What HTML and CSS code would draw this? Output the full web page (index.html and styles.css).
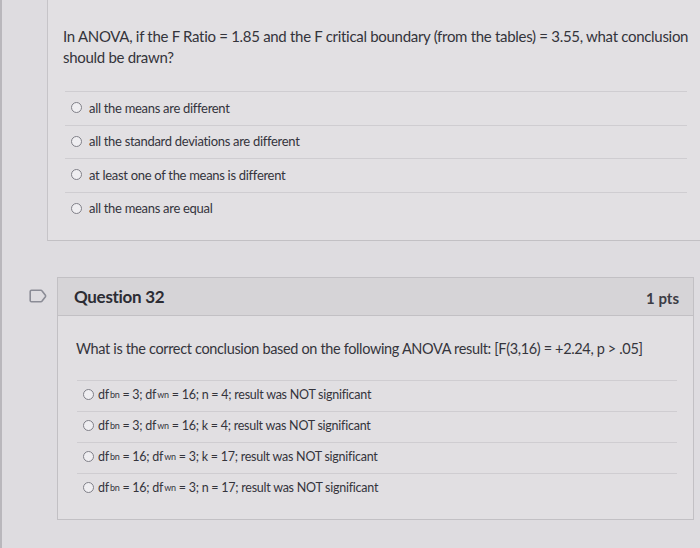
FILE: index.html
```html
<!DOCTYPE html>
<html lang="en">
<head>
<meta charset="utf-8">
<title>Quiz</title>
<link rel="stylesheet" href="styles.css">
</head>
<body>
<main class="page">
  <section class="card-prev">
    <p class="q-text">In ANOVA, if the F Ratio = 1.85 and the F critical boundary (from the tables) = 3.55, what conclusion should be drawn?</p>
    <ul class="answers answers-prev">
      <li><span class="radio"></span>all the means are different</li>
      <li><span class="radio"></span>all the standard deviations are different</li>
      <li><span class="radio"></span>at least one of the means is different</li>
      <li><span class="radio"></span>all the means are equal</li>
    </ul>
  </section>

  <div class="q-row">
    <svg class="bookmark" width="18" height="14" viewBox="0 0 18 14" aria-hidden="true">
      <path d="M2.5 1.2 H11.8 Q12.6 1.2 13.1 1.9 L16.4 6.3 Q16.9 7 16.4 7.7 L13.1 12.1 Q12.6 12.8 11.8 12.8 H2.5 Q1.2 12.8 1.2 11.5 V2.5 Q1.2 1.2 2.5 1.2 Z" fill="none" stroke="#8b8c96" stroke-width="1.6" stroke-linejoin="round"/>
    </svg>
    <section class="question">
      <header class="q-header">
        <h2 class="q-title">Question 32</h2>
        <span class="q-pts">1 pts</span>
      </header>
      <div class="q-body">
        <p class="q-text2">What is the correct conclusion based on the following ANOVA result: [F(3,16) = +2.24, p &gt; .05]</p>
        <ul class="answers answers-cur">
          <li><span class="radio"></span>df<sub>bn</sub>&nbsp;= 3; df<sub>wn</sub>&nbsp;= 16; n = 4; result was NOT significant</li>
          <li><span class="radio"></span>df<sub>bn</sub>&nbsp;= 3; df<sub>wn</sub>&nbsp;= 16; k = 4; result was NOT significant</li>
          <li><span class="radio"></span>df<sub>bn</sub>&nbsp;= 16; df<sub>wn</sub>&nbsp;= 3; k = 17; result was NOT significant</li>
          <li><span class="radio"></span>df<sub>bn</sub>&nbsp;= 16; df<sub>wn</sub>&nbsp;= 3; n = 17; result was NOT significant</li>
        </ul>
      </div>
    </section>
  </div>
</main>
</body>
</html>
```

FILE: styles.css
```css
html, body {
  margin: 0;
  padding: 0;
}
body {
  width: 700px;
  height: 548px;
  overflow: hidden;
  background: #dedce0;
  font-family: Lato, "Open Sans", "Liberation Sans", sans-serif;
  color: #34343c;
  border-left: 2px solid #b9b7bc;
  box-sizing: border-box;
}
.page {
  display: flex;
  flex-direction: column;
}
.card-prev {
  margin-left: 45px;
  width: 680px;
  height: 241px;
  box-sizing: border-box;
  border-left: 1px solid #c6c4c8;
  border-bottom: 1px solid #c2c0c4;
  background: #e2e0e3;
  padding: 26px 0 0 15px;
}
.q-text {
  margin: 0;
  width: 640px;
  font-size: 15px;
  line-height: 21px;
  letter-spacing: -0.3px;
  color: #34343b;
}
ul.answers {
  list-style: none;
  margin: 0;
  padding: 0;
}
.answers li {
  display: flex;
  align-items: center;
  box-sizing: border-box;
  border-top: 1px solid #cfcdd1;
}
.answers-prev {
  margin: 23px 0 0 2px !important;
  width: 622px;
}
.answers-prev li {
  height: 33.5px;
  font-size: 13px;
  letter-spacing: -0.3px;
  padding-left: 6px;
  padding-bottom: 1px;
}
.answers-prev li .radio {
  margin-right: 7px;
}
.radio {
  display: inline-block;
  width: 9px;
  height: 9px;
  border: 1px solid #808088;
  border-radius: 50%;
  background: #efeef1;
  flex: none;
}
.q-row {
  display: flex;
  align-items: flex-start;
  margin-top: 36px;
  padding-left: 27px;
  gap: 10px;
}
.bookmark {
  margin-top: 12px;
  flex: none;
}
.question {
  width: 637px;
  height: 243px;
  box-sizing: border-box;
  border: 1px solid #c2c0c4;
  background: #e1dfe2;
}
.q-header {
  display: flex;
  align-items: center;
  justify-content: space-between;
  height: 38px;
  box-sizing: border-box;
  padding: 0 14px 0 16px;
  background: #d6d4d7;
  border-bottom: 1px solid #c2c0c4;
}
.q-title {
  margin: 0;
  font-size: 17px;
  font-weight: 700;
  letter-spacing: -0.3px;
  color: #2c2c33;
}
.q-pts {
  font-size: 15px;
  font-weight: 700;
  color: #3c3c44;
  margin-top: 2px;
}
.q-body {
  padding: 23px 16px 0 18px;
}
.q-text2 {
  margin: 0;
  font-size: 14.5px;
  line-height: 20px;
  letter-spacing: -0.35px;
  color: #35353c;
}
.answers-cur {
  margin: 21px 0 0 1px !important;
  width: 600px;
}
.answers-cur li {
  height: 31px;
  font-size: 12.5px;
  letter-spacing: -0.25px;
  padding-left: 6px;
  padding-bottom: 3px;
}
.answers-cur li .radio {
  margin-right: 4px;
}
sub {
  font-size: 9px;
  vertical-align: -3px;
  line-height: 0;
  margin-left: 1px;
}
```
